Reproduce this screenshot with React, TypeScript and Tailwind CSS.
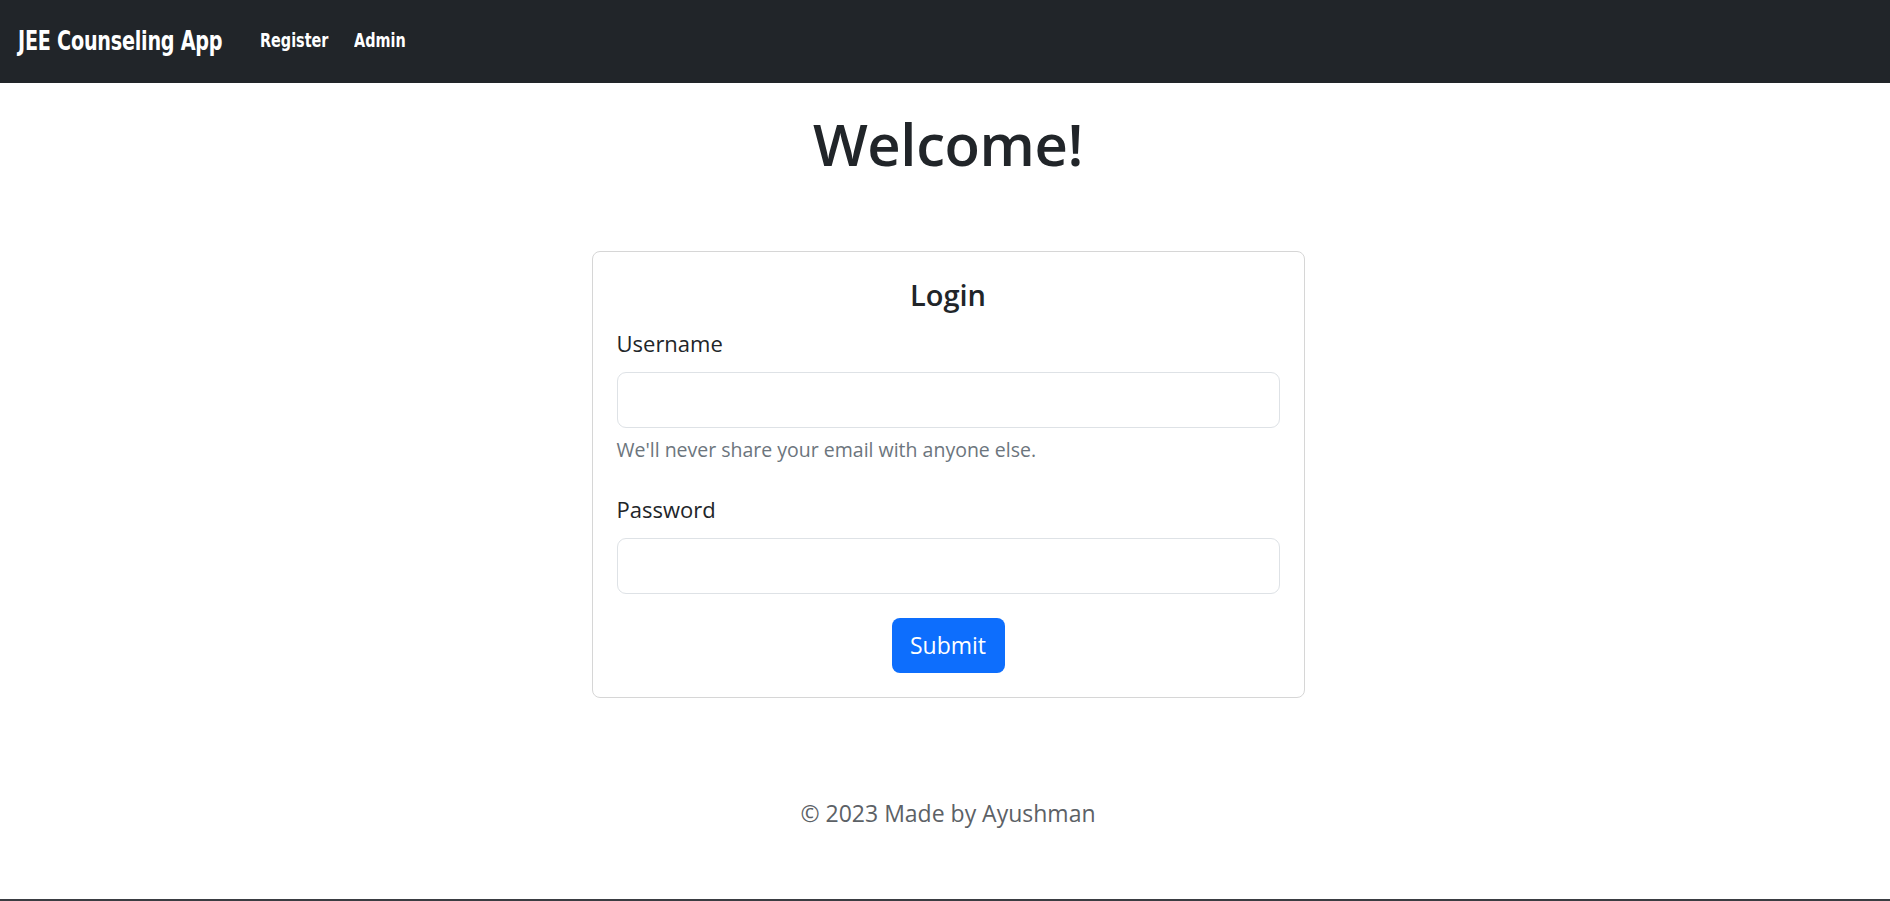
import React from 'react';

const navFont = { fontFamily: '"DejaVu Sans Condensed", "Liberation Sans", sans-serif' };

const App: React.FC = () => {
  return (
    <div className="min-h-screen bg-white text-[#212529] font-['Open_Sans',sans-serif]">
      {/* navbar - condensed font squeezed horizontally */}
      <nav className="h-[83px] bg-[#212529] flex items-center pl-[18px] whitespace-nowrap" style={navFont}>
        <div className="w-[242px]">
          <span className="inline-block origin-left scale-x-[0.79] text-white text-[27px] font-bold tracking-[-0.3px] leading-none whitespace-nowrap">
            JEE Counseling App
          </span>
        </div>
        <div className="w-[94px]">
          <a className="inline-block origin-left scale-x-[0.8] text-white text-[20px] font-bold leading-none">Register</a>
        </div>
        <div>
          <a className="inline-block origin-left scale-x-[0.8] text-white text-[20px] font-bold leading-none">Admin</a>
        </div>
      </nav>

      <main className="flex flex-col items-center">
        <h1 className="mt-[25px] ml-[6px] text-[58px] leading-[72px] font-semibold tracking-[-0.4px] text-center">Welcome!</h1>

        <div className="mt-[71px] ml-[6px] w-[713px] border border-[#d6d6d6] rounded-[8px] px-6 pt-[25px] pb-6">
          <h4 className="text-[29px] leading-[36px] font-semibold text-center">Login</h4>

          <label className="block mt-[14px] text-[22px] leading-[33px]">Username</label>
          <input
            type="text"
            className="block w-full mt-3 h-[56px] border border-[#dee2e6] rounded-[9px] px-4 text-[22px] outline-none"
          />
          <p className="mt-[7px] text-[19.5px] leading-[29px] text-[#6c757d]">
            We'll never share your email with anyone else.
          </p>

          <label className="block mt-[29px] text-[22px] leading-[33px]">Password</label>
          <input
            type="password"
            className="block w-full mt-3 h-[56px] border border-[#dee2e6] rounded-[9px] px-4 text-[22px] outline-none"
          />

          <div className="flex justify-center mt-6">
            <button className="w-[113px] h-[55px] bg-[#0d6efd] text-white text-[23px] rounded-[8px]">
              Submit
            </button>
          </div>
        </div>

        <footer className="mt-[97px] ml-[6px] text-[23px] leading-[36px] text-[#5c6166] text-center">
          © 2023 Made by Ayushman
        </footer>
      </main>

      <div className="mt-[68px] h-[40px] bg-[#3a3d42]" />
    </div>
  );
};

export default App;
